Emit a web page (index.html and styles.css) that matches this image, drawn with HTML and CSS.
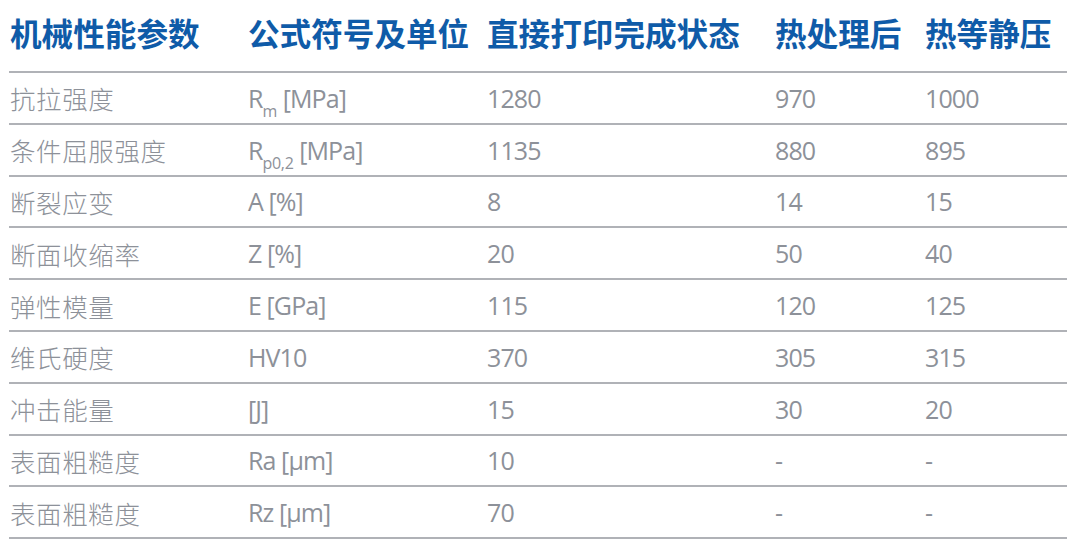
FILE: index.html
```html
<!DOCTYPE html>
<html lang="zh">
<head>
<meta charset="utf-8">
<title>机械性能参数</title>
<link rel="stylesheet" href="styles.css">
</head>
<body>
<div class="table">
  <div class="row head">
    <div>机械性能参数</div><div>公式符号及单位</div><div>直接打印完成状态</div><div>热处理后</div><div>热等静压</div>
  </div>
  <div class="row"><div>抗拉强度</div><div>R<sub>m</sub> [MPa]</div><div>1280</div><div>970</div><div>1000</div></div>
  <div class="row"><div>条件屈服强度</div><div>R<sub>p0,2</sub> [MPa]</div><div>1135</div><div>880</div><div>895</div></div>
  <div class="row"><div>断裂应变</div><div>A [%]</div><div>8</div><div>14</div><div>15</div></div>
  <div class="row"><div>断面收缩率</div><div>Z [%]</div><div>20</div><div>50</div><div>40</div></div>
  <div class="row"><div>弹性模量</div><div>E [GPa]</div><div>115</div><div>120</div><div>125</div></div>
  <div class="row"><div>维氏硬度</div><div>HV10</div><div>370</div><div>305</div><div>315</div></div>
  <div class="row"><div>冲击能量</div><div>[J]</div><div>15</div><div>30</div><div>20</div></div>
  <div class="row"><div>表面粗糙度</div><div>Ra [µm]</div><div>10</div><div>-</div><div>-</div></div>
  <div class="row"><div>表面粗糙度</div><div>Rz [µm]</div><div>70</div><div>-</div><div>-</div></div>
</div>
</body>
</html>
```
FILE: styles.css
```css
html, body {
  margin: 0;
  padding: 0;
  background: #ffffff;
}
.table {
  width: 1058px;
  margin-left: 9px;
  font-family: "Open Sans", "Noto Sans CJK SC", sans-serif;
  font-size: 25px;
  font-weight: 400;
  color: #8d9199;
}
.row {
  display: grid;
  grid-template-columns: 239px 239px 288px 150px 142px;
  align-items: center;
  height: 51.8px;
  box-sizing: border-box;
  border-bottom: 2px solid #b0b2b7;
  white-space: nowrap;
  letter-spacing: -0.9px;
}
.row > div:first-child {
  font-family: "Noto Sans CJK SC", sans-serif;
  font-size: 25.5px;
  font-weight: 300;
  letter-spacing: 0.6px;
  padding-left: 1px;
}
.row.head {
  height: 73px;
  padding-bottom: 8px;
  color: #0f5ba8;
  font-family: "Noto Sans CJK SC", sans-serif;
  font-size: 31.6px;
  font-weight: 700;
  letter-spacing: 0;
}
.row.head > div:first-child {
  font-size: 31.6px;
  font-weight: 700;
  letter-spacing: 0;
}
sub {
  font-size: 16px;
  vertical-align: -9px;
  line-height: 0;
  letter-spacing: -0.3px;
}
```
